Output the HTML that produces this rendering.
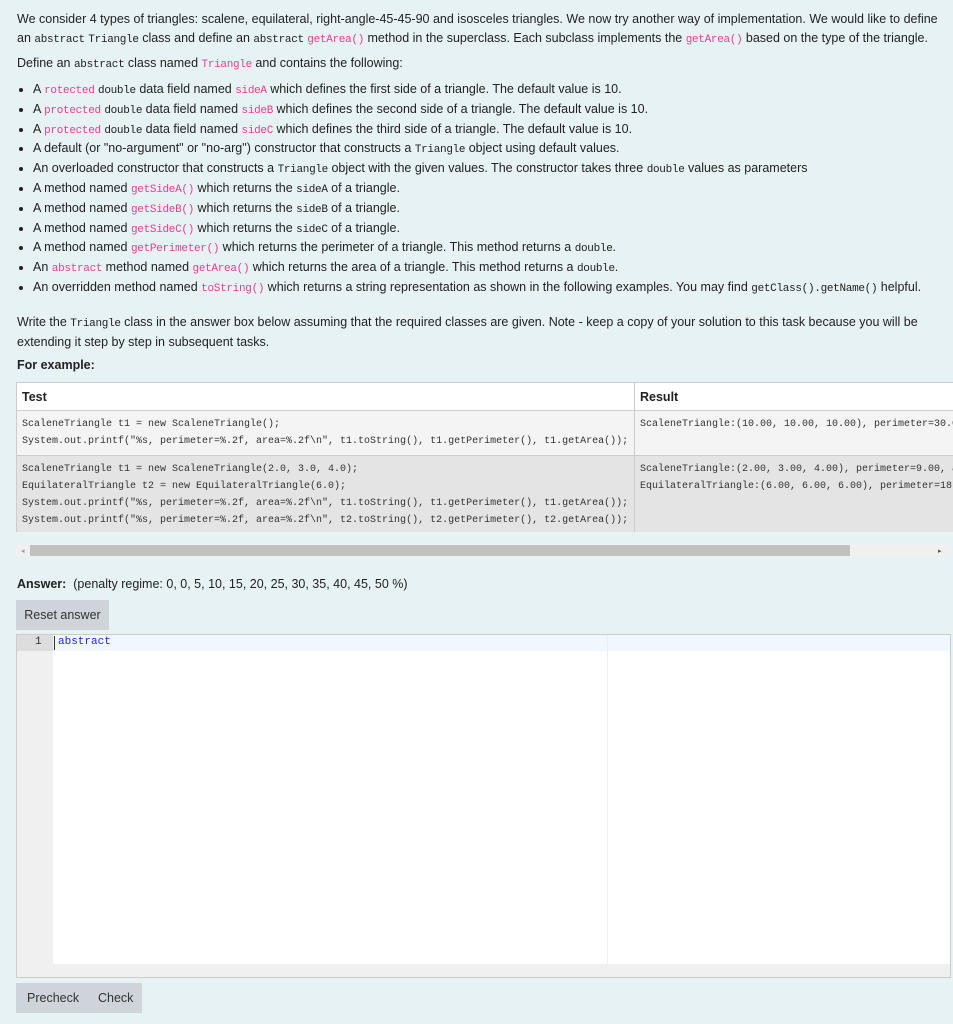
<!DOCTYPE html>
<html><head><meta charset="utf-8"><style>
body{margin:0;background:#e7f2f4;font-family:"Liberation Sans",sans-serif;font-size:12.5px;color:#222;width:953px;height:1024px;overflow:hidden;position:relative}
.t{position:absolute;left:17px;white-space:nowrap}
code{font-family:"Liberation Mono",monospace;font-size:11px;letter-spacing:-0.3px;line-height:1}
.p{color:#e83e8c}
ul{position:absolute;left:17px;top:80px;margin:0;padding:0 0 0 16px;white-space:nowrap}
li{height:19.8px;line-height:19.8px}
table{position:absolute;left:0;top:0;border-collapse:collapse;table-layout:fixed;width:980px}
td,th{border:1px solid #ccc;text-align:left}
th{background:#fff;font-size:12.5px;height:27px;padding:0 5px;vertical-align:middle}
td{font-family:"Liberation Mono",monospace;font-size:10px;line-height:17px;padding:5px 5px;white-space:pre;color:#333;vertical-align:top;overflow:hidden}
.r1 td{background:#f4f4f4;height:32px}
.r2 td{background:#e4e4e4;height:66px}
</style></head><body>
<div class="t" style="top:10px;line-height:19px">We consider 4 types of triangles: scalene, equilateral, right-angle-45-45-90 and isosceles triangles. We now try another way of implementation. We would like to define<br>an <code>abstract</code> <code>Triangle</code> class and define an <code>abstract</code> <code class="p">getArea()</code> method in the superclass. Each subclass implements the <code class="p">getArea()</code> based on the type of the triangle.</div>
<div class="t" style="top:56px">Define an <code>abstract</code> class named <code class="p">Triangle</code> and contains the following:</div>
<ul>
<li>A <code class="p">rotected</code> <code>double</code> data field named <code class="p">sideA</code> which defines the first side of a triangle. The default value is 10.</li>
<li>A <code class="p">protected</code> <code>double</code> data field named <code class="p">sideB</code> which defines the second side of a triangle. The default value is 10.</li>
<li>A <code class="p">protected</code> <code>double</code> data field named <code class="p">sideC</code> which defines the third side of a triangle. The default value is 10.</li>
<li>A default (or "no-argument" or "no-arg") constructor that constructs a <code>Triangle</code> object using default values.</li>
<li>An overloaded constructor that constructs a <code>Triangle</code> object with the given values. The constructor takes three <code>double</code> values as parameters</li>
<li>A method named <code class="p">getSideA()</code> which returns the <code>sideA</code> of a triangle.</li>
<li>A method named <code class="p">getSideB()</code> which returns the <code>sideB</code> of a triangle.</li>
<li>A method named <code class="p">getSideC()</code> which returns the <code>sideC</code> of a triangle.</li>
<li>A method named <code class="p">getPerimeter()</code> which returns the perimeter of a triangle. This method returns a <code>double</code>.</li>
<li>An <code class="p">abstract</code> method named <code class="p">getArea()</code> which returns the area of a triangle. This method returns a <code>double</code>.</li>
<li>An overridden method named <code class="p">toString()</code> which returns a string representation as shown in the following examples. You may find <code>getClass().getName()</code> helpful.</li>
</ul>
<div class="t" style="top:312px;line-height:20px">Write the <code>Triangle</code> class in the answer box below assuming that the required classes are given. Note - keep a copy of your solution to this task because you will be<br>extending it step by step in subsequent tasks.</div>
<div class="t" style="top:358px;font-weight:bold">For example:</div>
<div style="position:absolute;left:16px;top:382px;width:937px;height:150px;overflow:hidden">
<table>
<colgroup><col style="width:618px"><col style="width:362px"></colgroup>
<tr><th>Test</th><th>Result</th></tr>
<tr class="r1"><td>ScaleneTriangle t1 = new ScaleneTriangle();
System.out.printf("%s, perimeter=%.2f, area=%.2f\n", t1.toString(), t1.getPerimeter(), t1.getArea());</td><td>ScaleneTriangle:(10.00, 10.00, 10.00), perimeter=30.00, area=43.30</td></tr>
<tr class="r2"><td>ScaleneTriangle t1 = new ScaleneTriangle(2.0, 3.0, 4.0);
EquilateralTriangle t2 = new EquilateralTriangle(6.0);
System.out.printf("%s, perimeter=%.2f, area=%.2f\n", t1.toString(), t1.getPerimeter(), t1.getArea());
System.out.printf("%s, perimeter=%.2f, area=%.2f\n", t2.toString(), t2.getPerimeter(), t2.getArea());</td><td>ScaleneTriangle:(2.00, 3.00, 4.00), perimeter=9.00, area=2.90
EquilateralTriangle:(6.00, 6.00, 6.00), perimeter=18.00, area=15.59</td></tr>
</table></div>
<div style="position:absolute;left:16px;top:544px;width:934px;height:13px;background:#f0f0f0"></div>
<div style="position:absolute;left:30px;top:545px;width:820px;height:11px;background:#c1c1c1"></div>
<div style="position:absolute;left:21px;top:547px;font-size:7px;color:#999">◂</div>
<div style="position:absolute;left:938px;top:547px;font-size:7px;color:#555">▸</div>
<div class="t" style="top:577px"><b>Answer:</b>&nbsp; (penalty regime: 0, 0, 5, 10, 15, 20, 25, 30, 35, 40, 45, 50 %)</div>
<div style="position:absolute;left:16px;top:600px;width:93px;height:30px;background:#ced4da;font-size:12.5px;line-height:30px;text-align:center;color:#333">Reset answer</div>
<div style="position:absolute;left:16px;top:634px;width:933px;height:342px;background:#f0f0f0;border:1px solid #ccc">
<div style="position:absolute;left:36px;top:0;right:0;height:329px;background:#fff"></div>
<div style="position:absolute;left:36px;top:0;right:0;height:16px;background:#e8f2ff;opacity:.6"></div>
<div style="position:absolute;left:590px;top:0;width:1px;height:329px;background:#eee"></div>
<div style="position:absolute;left:0;top:0;width:36px;height:16px;background:#ddd"></div>
<div style="position:absolute;left:18px;top:1px;font:11px 'Liberation Mono',monospace;color:#333">1</div>
<div style="position:absolute;left:37px;top:1px;width:1px;height:14px;background:#333"></div>
<div style="position:absolute;left:41px;top:1px;font:11px 'Liberation Mono',monospace;color:#22d">abstract</div>
</div>
<div style="position:absolute;left:16px;top:983px;width:126px;height:30px;background:#ced4da;font-size:12.5px;line-height:30px;color:#333"><span style="position:absolute;left:11px">Precheck</span><span style="position:absolute;left:82px">Check</span></div>
</body></html>
